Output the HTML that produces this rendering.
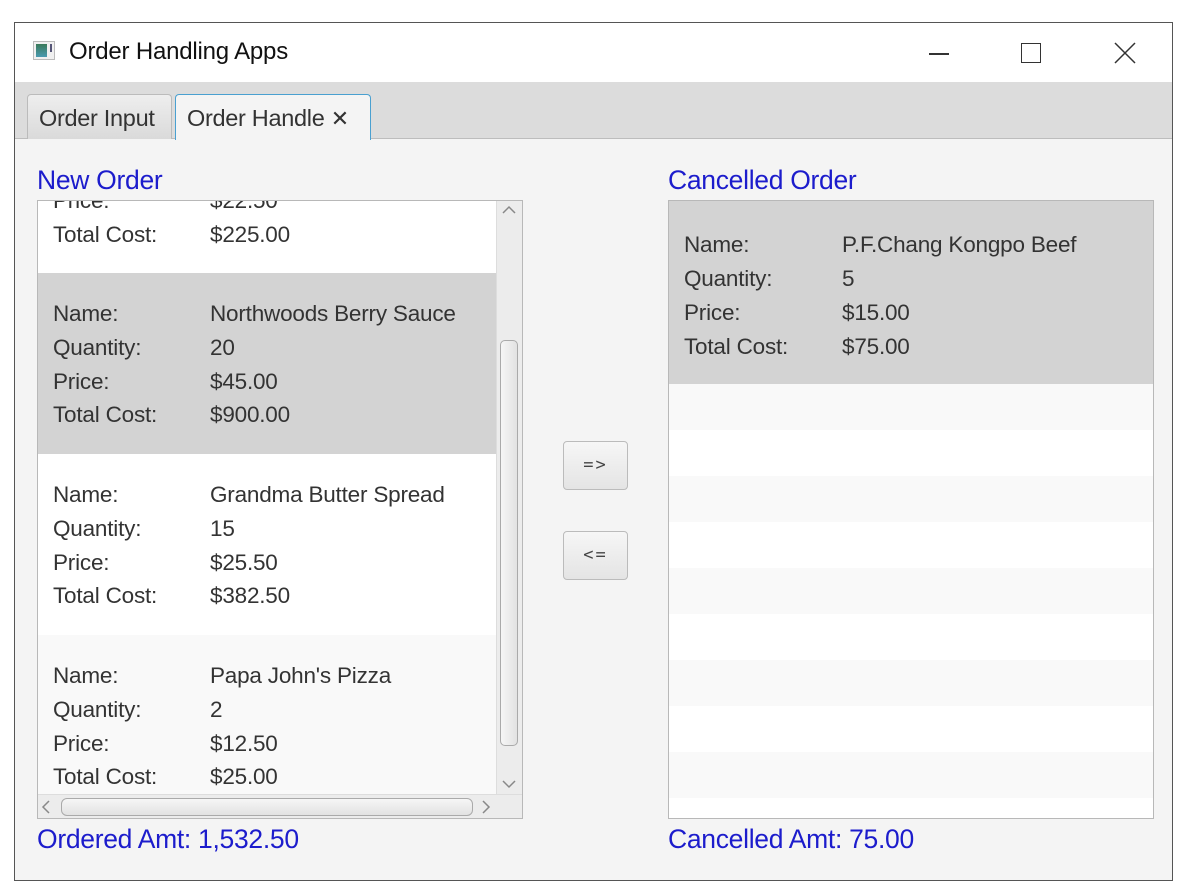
<!DOCTYPE html>
<html><head><meta charset="utf-8"><style>
*{margin:0;padding:0;box-sizing:border-box}
body{width:1186px;height:892px;background:#fff;position:relative;overflow:hidden;font-family:"Liberation Sans",sans-serif;color:#333}
.abs{position:absolute}
#win{left:14px;top:22px;width:1159px;height:859px;border:1px solid #555;background:#f4f4f4}
#title{left:15px;top:23px;width:1157px;height:59px;background:#fff}
#tabbar{left:15px;top:82px;width:1157px;height:57px;background:#dcdcdc;border-bottom:1px solid #bdbdbd}
.tab{position:absolute;top:94px;height:45px;font-size:23.5px;line-height:46px;padding-left:11px;border:1px solid #bbb;border-bottom:none;border-radius:4px 4px 0 0;white-space:nowrap;letter-spacing:-0.3px}
.blue{color:#1c1ccc;font-size:26.5px;letter-spacing:-0.3px;white-space:nowrap}
.list{border:1px solid #b8b8b8;overflow:hidden}
.row{position:absolute;left:0;width:100%}
.ln{position:absolute;font-size:22.5px;white-space:nowrap;letter-spacing:-0.2px}
.btn{position:absolute;left:563px;width:65px;height:49px;border:1px solid #bbb;border-radius:4px;background:linear-gradient(#f6f6f6,#e4e4e4);font-family:"DejaVu Sans Mono",monospace;font-size:17px;text-align:center;line-height:47px;color:#444;letter-spacing:2px}
</style></head><body>
<div id="win" class="abs"></div>
<div id="title" class="abs">
 <div class="abs" style="left:18px;top:18px;width:22px;height:19px;border:1px solid #bbb;background:#f0f0f0">
  <div class="abs" style="left:2px;top:2px;width:11px;height:13px;background:linear-gradient(#3a7a5a,#4a9ab0)"></div>
  <div class="abs" style="left:16px;top:2px;width:2px;height:8px;background:#557"></div>
 </div>
 <div class="abs" style="left:54px;top:15px;font-size:24px;color:#111;letter-spacing:-0.2px">Order Handling Apps</div>
 <div class="abs" style="left:914px;top:30px;width:20px;height:1.5px;background:#333"></div>
 <div class="abs" style="left:1006px;top:20px;width:20px;height:20px;border:1.5px solid #333"></div>
 <svg class="abs" style="left:1099px;top:19px" width="22" height="22"><path d="M1 1L21 21M21 1L1 21" stroke="#333" stroke-width="1.5"/></svg>
</div>
<div id="tabbar" class="abs"></div>
<div class="tab" style="left:27px;width:145px;background:linear-gradient(#eee,#dadada)">Order Input</div>
<div class="tab" style="left:175px;width:196px;height:46px;background:#f4f4f4;border:1.5px solid #4aa0d0;border-bottom:none">Order Handle <span style="font-size:22px">✕</span></div>

<div class="abs blue" style="left:37px;top:165px">New Order</div>
<div class="abs blue" style="left:668px;top:165px">Cancelled Order</div>

<div class="abs list" style="left:37px;top:200px;width:486px;height:619px;background:#fff">
 <div class="row" style="top:0;height:72px;background:#fff">
  <div class="ln" style="left:15px;top:-13px">Price:</div><div class="ln" style="left:172px;top:-13px">$22.50</div>
  <div class="ln" style="left:15px;top:21px">Total Cost:</div><div class="ln" style="left:172px;top:21px">$225.00</div>
 </div>
 <div class="row" style="top:72px;height:181px;background:#d3d3d3">
  <div class="ln" style="left:15px;top:28px">Name:</div><div class="ln" style="left:172px;top:28px">Northwoods Berry Sauce</div>
  <div class="ln" style="left:15px;top:62px">Quantity:</div><div class="ln" style="left:172px;top:62px">20</div>
  <div class="ln" style="left:15px;top:96px">Price:</div><div class="ln" style="left:172px;top:96px">$45.00</div>
  <div class="ln" style="left:15px;top:129px">Total Cost:</div><div class="ln" style="left:172px;top:129px">$900.00</div>
 </div>
 <div class="row" style="top:253px;height:181px;background:#fff">
  <div class="ln" style="left:15px;top:28px">Name:</div><div class="ln" style="left:172px;top:28px">Grandma Butter Spread</div>
  <div class="ln" style="left:15px;top:62px">Quantity:</div><div class="ln" style="left:172px;top:62px">15</div>
  <div class="ln" style="left:15px;top:96px">Price:</div><div class="ln" style="left:172px;top:96px">$25.50</div>
  <div class="ln" style="left:15px;top:129px">Total Cost:</div><div class="ln" style="left:172px;top:129px">$382.50</div>
 </div>
 <div class="row" style="top:434px;height:181px;background:#f9f9f9">
  <div class="ln" style="left:15px;top:28px">Name:</div><div class="ln" style="left:172px;top:28px">Papa John's Pizza</div>
  <div class="ln" style="left:15px;top:62px">Quantity:</div><div class="ln" style="left:172px;top:62px">2</div>
  <div class="ln" style="left:15px;top:96px">Price:</div><div class="ln" style="left:172px;top:96px">$12.50</div>
  <div class="ln" style="left:15px;top:129px">Total Cost:</div><div class="ln" style="left:172px;top:129px">$25.00</div>
 </div>
 <div class="abs" style="left:458px;top:0;width:27px;height:593px;background:#ececec;border-left:1px solid #ddd"></div>
 <svg class="abs" style="left:463px;top:4px" width="16" height="10"><path d="M2 8L8 2L14 8" stroke="#888" stroke-width="1.5" fill="none"/></svg>
 <div class="abs" style="left:462px;top:139px;width:18px;height:406px;border:1px solid #aaa;border-radius:5px;background:linear-gradient(90deg,#f6f6f6,#e2e2e2)"></div>
 <svg class="abs" style="left:463px;top:578px" width="16" height="10"><path d="M2 2L8 8L14 2" stroke="#888" stroke-width="1.5" fill="none"/></svg>
 <div class="abs" style="left:0;top:593px;width:485px;height:25px;background:#ececec;border-top:1px solid #ddd"></div>
 <svg class="abs" style="left:3px;top:598px" width="10" height="16"><path d="M8 2L2 8L8 14" stroke="#888" stroke-width="1.5" fill="none"/></svg>
 <div class="abs" style="left:23px;top:597px;width:412px;height:18px;border:1px solid #aaa;border-radius:6px;background:linear-gradient(#f6f6f6,#e2e2e2)"></div>
 <svg class="abs" style="left:443px;top:598px" width="10" height="16"><path d="M2 2L8 8L2 14" stroke="#888" stroke-width="1.5" fill="none"/></svg>
</div>

<div class="btn" style="top:441px">=&gt;</div>
<div class="btn" style="top:531px">&lt;=</div>

<div class="abs list" style="left:668px;top:200px;width:486px;height:619px;background:#fff">
 <div class="row" style="top:0;height:183px;background:#d3d3d3">
  <div class="ln" style="left:15px;top:31px">Name:</div><div class="ln" style="left:173px;top:31px">P.F.Chang Kongpo Beef</div>
  <div class="ln" style="left:15px;top:65px">Quantity:</div><div class="ln" style="left:173px;top:65px">5</div>
  <div class="ln" style="left:15px;top:99px">Price:</div><div class="ln" style="left:173px;top:99px">$15.00</div>
  <div class="ln" style="left:15px;top:133px">Total Cost:</div><div class="ln" style="left:173px;top:133px">$75.00</div>
 </div>
 <div class="row" style="top:183px;height:46px;background:#f9f9f9"></div>
 <div class="row" style="top:275px;height:46px;background:#f9f9f9"></div>
 <div class="row" style="top:367px;height:46px;background:#f9f9f9"></div>
 <div class="row" style="top:459px;height:46px;background:#f9f9f9"></div>
 <div class="row" style="top:551px;height:46px;background:#f9f9f9"></div>
</div>

<div class="abs blue" style="left:37px;top:824px">Ordered Amt: 1,532.50</div>
<div class="abs blue" style="left:668px;top:824px">Cancelled Amt: 75.00</div>
</body></html>
